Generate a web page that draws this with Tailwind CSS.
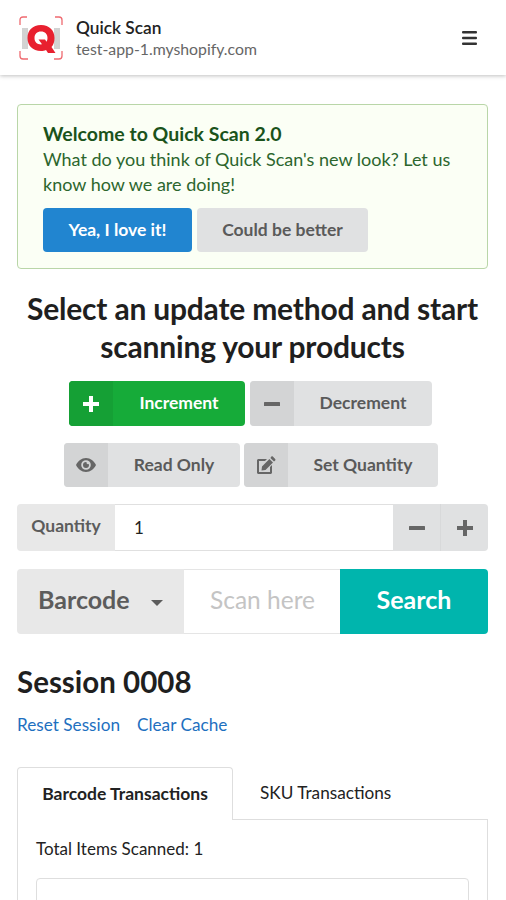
<!DOCTYPE html>
<html>
<head>
<meta charset="utf-8">
<script src="https://cdn.jsdelivr.net/npm/@tailwindcss/browser@4"></script>
</head>
<body class="bg-white font-['Lato','Noto_Sans',sans-serif] text-[#1f1f1f] h-[900px] overflow-hidden">
<header class="h-[75px] flex items-center pl-[19px] pr-[29px] bg-white shadow-[0_1px_4px_rgba(0,0,0,0.25)]">
  <svg class="w-[44px] h-[44px] shrink-0" viewBox="0 0 44 44" fill="none">
    <path d="M8 1H4Q1 1 1 4V9M36 1H40Q43 1 43 4V9M1 35V40Q1 43 4 43H9M43 35V40Q43 43 40 43H35" stroke="#ef6a70" stroke-width="1.3"/>
    <path d="M4 12V33M6 12V33M8 12V33M36 12V33M38 12V33M40 12V33" stroke="#b5b5b5" stroke-width="1.2"/>
    <path fill-rule="evenodd" d="M22 9C13.500 9 8.500 14.500 8.500 22C8.500 29.500 13.500 35 22 35C24 35 25.500 34.700 27 34L29 37H36.500L32.500 31C34.500 28.800 35.500 25.700 35.500 22C35.500 14.500 30.500 9 22 9ZM22 15.500C26 15.500 28.500 18 28.500 22C28.500 23.500 28.200 24.800 27.600 25.800L26 23.500H19.500L23 28.300C22.700 28.400 22.300 28.400 22 28.400C18 28.400 15.500 26 15.500 22C15.500 18 18 15.500 22 15.500Z" fill="#e8202f"/>
  </svg>
  <div class="ml-[13px] flex-1">
    <div class="text-[17.300px] leading-[23px] font-semibold text-[#222]">Quick Scan</div>
    <div class="text-[15.800px] leading-[20px] text-[#666]">test-app-1.myshopify.com</div>
  </div>
  <svg class="w-[15px] h-[14px]" viewBox="0 0 15 14" fill="#333"><rect y="0" width="15" height="2.400" rx="1"/><rect y="5.800" width="15" height="2.400" rx="1"/><rect y="11.600" width="15" height="2.400" rx="1"/></svg>
</header>

<main class="pl-[17px] pr-[18px]">
  <section class="mt-[29px] h-[165px] rounded-[4px] border border-[#b9d6a8] bg-[#fbfff5] pl-[25px] pr-[20px] pt-[16px]">
    <h2 class="text-[19.500px] leading-[25px] font-bold text-[#1a531b]">Welcome to Quick Scan 2.0</h2>
    <p class="text-[18px] leading-[25px] text-[#2c662d] mt-[1px]">What do you think of Quick Scan's new look? Let us know how we are doing!</p>
    <div class="flex gap-[5px] mt-[11px]">
      <button class="w-[149px] h-[44px] rounded-[4px] bg-[#2185d0] text-white text-[17.500px] font-bold">Yea, I love it!</button>
      <button class="w-[171px] h-[44px] rounded-[4px] bg-[#e0e1e2] text-[#5a5a5a] text-[17.500px] font-bold">Could be better</button>
    </div>
  </section>

  <h1 class="mt-[20px] text-center text-[30px] leading-[38px] font-bold tracking-[-0.2px] text-[#1f1f1f]">Select an update method and start scanning your products</h1>

  <div class="mt-[16px] flex justify-center gap-[5px] pr-[4px]">
    <button class="w-[176px] h-[45px] rounded-[4px] bg-[#16ab39] text-white text-[17.500px] font-bold flex overflow-hidden">
      <span class="w-[44px] h-full bg-[#15a035] flex items-center justify-center"><svg class="w-[16px] h-[16px]" viewBox="0 0 16 16" fill="#fff"><path d="M6 0h4v6h6v4h-6v6H6v-6H0V6h6z"/></svg></span>
      <span class="flex-1 self-center">Increment</span>
    </button>
    <button class="w-[182px] h-[45px] rounded-[4px] bg-[#e0e1e2] text-[#5a5a5a] text-[17.500px] font-bold flex overflow-hidden">
      <span class="w-[44px] h-full bg-[#d3d4d5] flex items-center justify-center"><svg class="w-[16px] h-[4px]" viewBox="0 0 16 4" fill="#666"><rect width="16" height="4" rx="0.500"/></svg></span>
      <span class="flex-1 self-center">Decrement</span>
    </button>
  </div>
  <div class="mt-[17px] flex justify-center gap-[4px] pr-[3px]">
    <button class="w-[176px] h-[44px] rounded-[4px] bg-[#e0e1e2] text-[#5a5a5a] text-[17.500px] font-bold flex overflow-hidden">
      <span class="w-[44px] h-full bg-[#d3d4d5] flex items-center justify-center"><svg class="w-[20px] h-[14px]" viewBox="0 0 20 14" fill="#666"><path fill-rule="evenodd" d="M10 0C5.500 0 2 3 0 7c2 4 5.500 7 10 7s8-3 10-7c-2-4-5.500-7-10-7zm0 2.200a4.800 4.800 0 1 1 0 9.600 4.800 4.800 0 0 1 0-9.600zM10 4a3 3 0 1 0 3 3c0-.4-.1-.8-.2-1.100A1.500 1.500 0 0 1 10.600 4z"/></svg></span>
      <span class="flex-1 self-center">Read Only</span>
    </button>
    <button class="w-[194px] h-[44px] rounded-[4px] bg-[#e0e1e2] text-[#5a5a5a] text-[17.500px] font-bold flex overflow-hidden">
      <span class="w-[44px] h-full bg-[#d3d4d5] flex items-center justify-center"><svg class="w-[20px] h-[18px]" viewBox="0 0 20 18" fill="#666"><path d="M16.800 0.600l2.400 2.400c.4.400.4 1 0 1.400L18 5.600 14.400 2 15.400 .6c.4-.4 1-.4 1.400 0zM13.400 3l3.600 3.600-7.500 7.500-4 .5.500-4zM2.500 3H11L9 5H3v11h11v-5l2-2v7.500c0 .8-.7 1.500-1.500 1.500h-12C1.700 18 1 17.300 1 16.500v-12C1 3.700 1.700 3 2.500 3z"/></svg></span>
      <span class="flex-1 self-center">Set Quantity</span>
    </button>
  </div>

  <div class="mt-[17px] flex h-[47px]">
    <div class="w-[98px] rounded-l-[4px] bg-[#e8e8e8] text-[#5c5c5c] text-[17.500px] font-bold flex items-center justify-center pb-[2px]">Quantity</div>
    <div class="flex-1 border-y border-[#e0e0e0] text-[17px] text-[#222] flex items-center pl-[19px]">1</div>
    <button class="w-[48px] bg-[#e0e1e2] border-r border-[#d8d9da] flex items-center justify-center"><svg class="w-[16px] h-[4px]" viewBox="0 0 16 4" fill="#666"><rect width="16" height="4" rx="0.500"/></svg></button>
    <button class="w-[47px] bg-[#e0e1e2] rounded-r-[4px] flex items-center justify-center"><svg class="w-[16px] h-[16px]" viewBox="0 0 16 16" fill="#666"><path d="M6 0h4v6h6v4h-6v6H6v-6H0V6h6z"/></svg></button>
  </div>

  <div class="mt-[18px] flex h-[65px]">
    <div class="w-[167px] rounded-l-[4px] bg-[#e8e8e8] text-[#5c5c5c] text-[25px] font-bold flex items-center pl-[21px] pb-[3px]">
      <span>Barcode</span>
      <span class="ml-[21px] mt-[6px] w-0 h-0 border-x-[6px] border-x-transparent border-t-[6px] border-t-[#5c5c5c]"></span>
    </div>
    <div class="w-[156px] border-y border-[#e5e5e5] text-[24.500px] text-[#c4c4c4] flex items-center pl-[26px] pb-[3px]">Scan here</div>
    <button class="flex-1 bg-[#00b5ad] rounded-r-[4px] text-white text-[25px] font-bold pb-[3px]">Search</button>
  </div>

  <h2 class="mt-[26px] text-[29.500px] leading-[44px] font-bold text-[#1f1f1f]">Session 0008</h2>
  <div class="mt-[9px] flex gap-[17px] text-[17.200px] leading-[24px] text-[#1e70bf]">
    <a>Reset Session</a>
    <a>Clear Cache</a>
  </div>

  <div class="mt-[30px] flex h-[53px] text-[17.200px] text-[#222]">
    <div class="w-[216px] rounded-t-[4px] border border-b-0 border-[#dedede] text-[17.500px] font-bold flex items-center justify-center">Barcode Transactions</div>
    <div class="flex-1 border-b border-[#dedede] flex items-center pl-[27px]">SKU Transactions</div>
  </div>
  <div class="border-x border-[#dedede] px-[18px] h-[200px]">
    <p class="pt-[17px] text-[17px] leading-[24px] text-[#222]">Total Items Scanned: 1</p>
    <div class="mt-[17px] h-[100px] rounded-[4px] border border-[#dedede]"></div>
  </div>
</main>
</body>
</html>
